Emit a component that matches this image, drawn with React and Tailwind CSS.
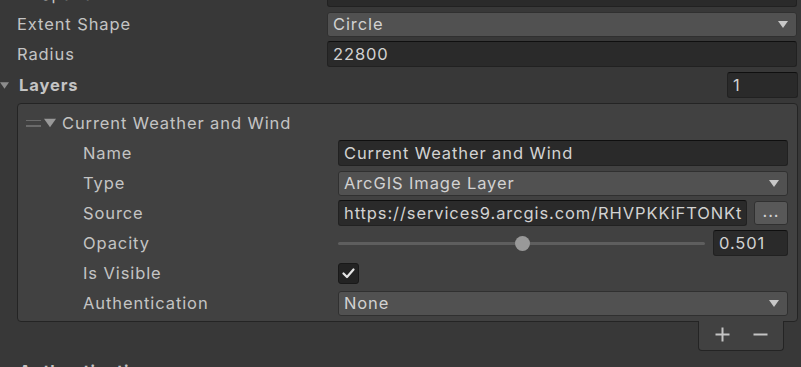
import React from 'react';

const Caret = ({ className = '' }) => (
  <svg width="10" height="7" viewBox="0 0 10 7" className={className}>
    <path d="M0 0 H10 L5 7 Z" fill="currentColor" />
  </svg>
);

const TextField = ({ value, className = '' }) => (
  <div
    className={`h-[26px] min-w-0 flex items-center px-[5px] bg-[#2a2a2a] border border-[#212121] border-t-[#0f0f0f] rounded-[3px] text-[#d2d2d2] whitespace-nowrap overflow-hidden ${className}`}
  >
    {value}
  </div>
);

const Dropdown = ({ value, className = '' }) => (
  <div
    className={`h-[25px] flex items-center justify-between pl-[5px] pr-[8px] bg-[#515151] border border-[#303030] rounded-[3px] text-[#d2d2d2] ${className}`}
  >
    <span>{value}</span>
    <Caret className="text-[#c8c8c8]" />
  </div>
);

const ListRow = ({ label, children }) => (
  <div className="h-[30px] flex items-center">
    <div className="w-[320px] shrink-0 pl-[65px] text-[#c4c4c4]">{label}</div>
    <div className="flex-1 min-w-0 flex items-center pr-[9px]">{children}</div>
  </div>
);

export default function App() {
  return (
    <div className="w-[801px] h-[367px] overflow-hidden bg-[#383838] text-[16.5px] tracking-[0.9px] font-['Inter',sans-serif] select-none">
      <div className="-mt-[21px] flex flex-col">
        {/* partially visible row */}
        <div className="h-[30px] flex items-center">
          <div className="w-[327px] shrink-0 pl-[40px] text-[#c4c4c4]">Spatial Reference WKID</div>
          <TextField value="4326" className="flex-1 mr-[4px]" />
        </div>
        <div className="h-[30px] flex items-center">
          <div className="w-[327px] shrink-0 pl-[17px] text-[#c4c4c4]">Extent Shape</div>
          <Dropdown value="Circle" className="flex-1 mr-[4px]" />
        </div>
        <div className="h-[30px] flex items-center">
          <div className="w-[327px] shrink-0 pl-[17px] text-[#c4c4c4]">Radius</div>
          <TextField value="22800" className="flex-1 mr-[4px]" />
        </div>

        {/* Layers header */}
        <div className="h-[30px] mt-[1px] flex items-center">
          <Caret className="text-[#8c8c8c] w-[9px] h-[11px]" />
          <div className="pl-[10px] font-bold text-[#c4c4c4] flex-1">Layers</div>
          <TextField value="1" className="w-[71px] mr-[3px]" />
        </div>

        {/* list box */}
        <div className="mt-[3px] ml-[17px] mr-[3px] relative">
          <div className="bg-[#414141] border border-[#242424] rounded-[4px] pt-[4px] pb-[3px]">
            <div className="h-[30px] flex items-center">
              <div className="ml-[8px] w-[15px] flex flex-col gap-[4px]">
                <div className="h-[1.5px] bg-[#6a6a6a]" />
                <div className="h-[1.5px] bg-[#6a6a6a]" />
              </div>
              <Caret className="ml-[3px] w-[12px] h-[10px] text-[#999999]" />
              <div className="ml-[6px] text-[#c4c4c4]">Current Weather and Wind</div>
            </div>
            <ListRow label="Name">
              <TextField value="Current Weather and Wind" className="flex-1" />
            </ListRow>
            <ListRow label="Type">
              <Dropdown value="ArcGIS Image Layer" className="flex-1" />
            </ListRow>
            <ListRow label="Source">
              <TextField value="https://services9.arcgis.com/RHVPKKiFTONKt" className="flex-1" />
              <div className="ml-[7px] shrink-0 w-[34px] h-[24px] flex items-center justify-center bg-[#585858] border border-[#303030] rounded-[3px] text-[#d2d2d2] pb-[4px]">
                ...
              </div>
            </ListRow>
            <ListRow label="Opacity">
              <div className="flex-1 relative h-[26px] flex items-center">
                <div className="w-full h-[3px] bg-[#5e5e5e] rounded-full" />
                <div className="absolute left-[177px] top-[6px] w-[15px] h-[15px] rounded-full bg-[#999999]" />
              </div>
              <TextField value="0.501" className="ml-[8px] w-[75px]" />
            </ListRow>
            <ListRow label="Is Visible">
              <div className="w-[21px] h-[21px] bg-[#232323] border border-[#191919] rounded-[3px] flex items-center justify-center">
                <svg width="13" height="11" viewBox="0 0 13 11">
                  <path d="M1.5 5.5 L5 9 L11.5 1.5" fill="none" stroke="#e6e6e6" strokeWidth="2.2" strokeLinecap="round" strokeLinejoin="round" />
                </svg>
              </div>
            </ListRow>
            <ListRow label="Authentication">
              <Dropdown value="None" className="flex-1" />
            </ListRow>
          </div>
          <div className="flex justify-end mr-[14px] -mt-[1px] relative">
            <div className="w-[86px] h-[30px] bg-[#414141] border border-t-0 border-[#242424] rounded-b-[4px] flex items-center justify-center gap-[23px] pb-[2px]">
              <svg width="15" height="15" viewBox="0 0 15 15">
                <path d="M7.5 0.5 V14.5 M0.5 7.5 H14.5" stroke="#c4c4c4" strokeWidth="2" />
              </svg>
              <svg width="15" height="15" viewBox="0 0 15 15">
                <path d="M0.5 7.5 H14.5" stroke="#c4c4c4" strokeWidth="2" />
              </svg>
            </div>
          </div>
        </div>

        {/* next section header, cut off */}
        <div className="h-[30px] mt-[5px] flex items-center">
          <Caret className="text-[#8c8c8c] w-[9px] h-[11px]" />
          <div className="pl-[10px] font-bold text-[#c4c4c4]">Authentication</div>
        </div>
      </div>
    </div>
  );
}
